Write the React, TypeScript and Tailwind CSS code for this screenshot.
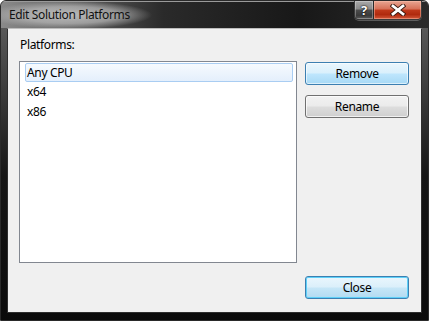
import React from "react";

const font = { fontFamily: '"Segoe UI", "Noto Sans", "Open Sans", sans-serif', letterSpacing: "-0.35px" };

function WinButton({ label, kind }: { label: string; kind: "hover" | "normal" | "default" }) {
  const cls =
    kind === "hover"
      ? "border-[#3c7fb1] bg-[linear-gradient(#eaf6fd_0%,#d9f0fc_48%,#bee6fd_52%,#a7d9f5_100%)] shadow-[inset_0_0_0_1px_rgba(255,255,255,0.6)]"
      : kind === "default"
      ? "border-[#3c7fb1] bg-[linear-gradient(#eaf6fd_0%,#dbeffa_48%,#c6e6f7_52%,#b2dbf2_100%)] shadow-[inset_0_0_0_1px_#5ed0f8]"
      : "border-[#707070] bg-[linear-gradient(#f2f2f2_0%,#ebebeb_48%,#dddddd_52%,#cfcfcf_100%)] shadow-[inset_0_0_0_1px_rgba(255,255,255,0.7)]";
  return (
    <div
      className={`h-[23px] w-[104px] rounded-[3px] border flex items-center justify-center text-[12px] text-black ${cls}`}
    >
      {label}
    </div>
  );
}

export default function App() {
  return (
    <div
      style={font}
      className="w-[429px] h-[321px] flex flex-col rounded-t-[6px] border border-[#2a2a2a] bg-[linear-gradient(to_bottom,#666666_0%,#4a4a4a_18%,#161616_55%,#0b0b0b_100%)] overflow-hidden"
    >
      {/* Title bar */}
      <div className="h-[27px] flex items-start justify-between bg-[linear-gradient(to_right,#8a8a8a_0%,#666666_15%,#2a2a2a_38%,#181818_70%,#2a2a2a_100%)] shadow-[inset_0_1px_0_#9a9a9a]">
        <div className="-ml-[14px] mt-[0px] px-[22px] h-[28px] flex items-center bg-[radial-gradient(closest-side,rgba(200,200,200,0.85)_0%,rgba(185,185,185,0.7)_60%,rgba(160,160,160,0)_100%)]">
          <span className="text-[12px] text-[#111] leading-none">
            Edit Solution Platforms
          </span>
        </div>
        <div className="mr-[6px] flex h-[19px] rounded-b-[5px] border border-t-0 border-[#3a3a3a] overflow-hidden shadow-[0_1px_0_rgba(255,255,255,0.25)]">
          <div className="w-[19px] h-full flex items-center justify-center border-r border-[#2a2a2a] bg-[linear-gradient(#a9a9a9_0%,#8a8a8a_45%,#4d4d4d_50%,#3a3a3a_80%,#5a5a5a_100%)] shadow-[inset_0_0_0_1px_rgba(255,255,255,0.3)]">
            <span className="text-white font-bold text-[13px] leading-none [text-shadow:0_0_2px_#000,0_0_1px_#000]">?</span>
          </div>
          <div className="w-[47px] h-full flex items-center justify-center bg-[linear-gradient(#e8a592_0%,#d67057_45%,#c0391b_50%,#b02a0e_75%,#d3583a_100%)] shadow-[inset_0_0_0_1px_rgba(255,200,180,0.45)]">
            <svg width="16" height="12" viewBox="0 0 16 12">
              <path
                d="M3 2 L13 10 M13 2 L3 10"
                stroke="#3a1a10"
                strokeWidth="4.6"
                strokeLinecap="square"
              />
              <path
                d="M3 2 L13 10 M13 2 L3 10"
                stroke="#ffffff"
                strokeWidth="2.8"
                strokeLinecap="square"
              />
            </svg>
          </div>
        </div>
      </div>

      {/* Client area */}
      <div className="mx-[6px] flex-1 border border-[#2e2e2e] border-t-[#bdbdbd] bg-[#f0f0f0] flex flex-col px-[11px] pt-[8px] pb-[13px]">
        <div className="h-[16px] flex items-center pl-[1px] text-[12px] text-black leading-none">Platforms:</div>
        <div className="mt-[8px] flex-1 flex gap-[8px]">
          <div className="w-[278px] h-[202px] border border-[#828790] bg-white pt-[1px] text-[12px] text-black">
            <div className="h-[19px] ml-[5px] mr-[3px] flex items-center rounded-[2px] border border-[#a9cdf2] bg-[linear-gradient(#f6fafe_0%,#e4effc_100%)] pl-[1px]">
              Any CPU
            </div>
            <div className="h-[20px] pl-[7px] flex items-center">x64</div>
            <div className="h-[19px] pl-[7px] flex items-center">x86</div>
          </div>
          <div className="flex flex-col pt-[1px]">
            <WinButton label="Remove" kind="hover" />
            <div className="mt-[10px]">
              <WinButton label="Rename" kind="normal" />
            </div>
            <div className="mt-auto">
              <WinButton label="Close" kind="default" />
            </div>
          </div>
        </div>
      </div>
      <div className="h-[7px]" />
    </div>
  );
}
